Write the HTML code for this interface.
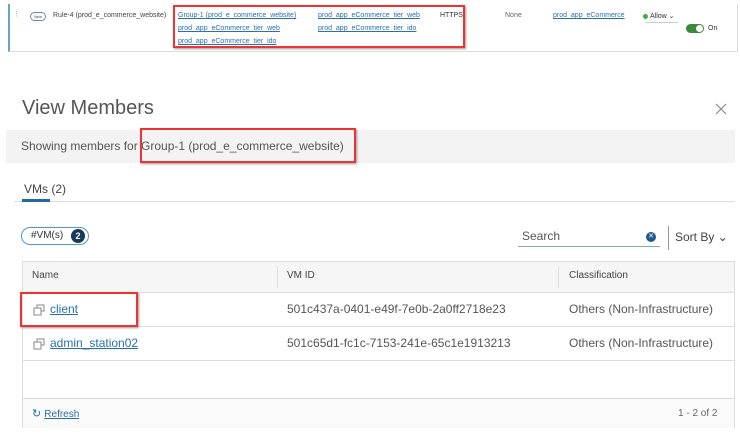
<!DOCTYPE html>
<html><head><style>
body{margin:0;width:740px;height:433px;background:#fff;font-family:"Liberation Sans",sans-serif;position:relative;overflow:hidden;color:#333}
.a{position:absolute;white-space:nowrap}
.l{color:#2a6fb0;text-decoration:underline}
.s{font-size:7px}
</style></head><body>
<div class="a" style="left:8px;top:4px;width:727px;height:47px;border-left:2px solid #6a9fd0;border-bottom:1px solid #ddd;border-right:1px solid #ddd"></div>
<div class="a s" style="left:13px;top:10px;color:#6a9fd0">⋮</div>
<div class="a" style="left:30px;top:12px;width:14px;height:7px;border:1px solid #6a8ab0;border-radius:5px;font-size:4px;text-align:center;line-height:7px;color:#446">New</div>
<div class="a s" style="left:53px;top:12px;color:#444">Rule-4 (prod_e_commerce_website)</div>
<div class="a" style="left:173px;top:5px;width:292px;height:43px;border:2px solid #e33;box-sizing:border-box;box-shadow:1px 1px 2px #999"></div>
<div class="a s l" style="left:178px;top:12px">Group-1 (prod_e_commerce_website)</div>
<div class="a s l" style="left:178px;top:25px">prod_app_eCommerce_tier_web</div>
<div class="a s l" style="left:178px;top:38px">prod_app_eCommerce_tier_ido</div>
<div class="a s l" style="left:318px;top:12px">prod_app_eCommerce_tier_web</div>
<div class="a s l" style="left:318px;top:25px">prod_app_eCommerce_tier_ido</div>
<div class="a s" style="left:440px;top:12px">HTTPS</div>
<div class="a s" style="left:505px;top:12px;color:#666">None</div>
<div class="a s l" style="left:553px;top:12px">prod_app_eCommerce</div>
<div class="a" style="left:643px;top:14px;width:5px;height:5px;border-radius:50%;background:#4a4"></div>
<div class="a s" style="left:650px;top:12px">Allow ⌄</div>
<div class="a" style="left:646px;top:22px;width:32px;border-top:1px solid #ccc"></div>
<div class="a" style="left:686px;top:24px;width:18px;height:9px;border-radius:5px;background:#3a8a3a"></div>
<div class="a" style="left:696px;top:25px;width:7px;height:7px;border-radius:50%;background:#fff"></div>
<div class="a s" style="left:708px;top:25px">On</div>
<div class="a" style="left:22px;top:97px;font-size:20px;color:#555">View Members</div>
<svg class="a" style="left:715px;top:103px" width="12" height="12"><path d="M1 1L11 11M11 1L1 11" stroke="#888" stroke-width="1.2"/></svg>
<div class="a" style="left:6px;top:130px;width:729px;height:33px;background:#f3f3f3"></div>
<div class="a" style="left:21px;top:139px;font-size:12px;color:#555">Showing members for Group-1 (prod_e_commerce_website)</div>
<div class="a" style="left:140px;top:128px;width:216px;height:35px;border:2px solid #e33;box-sizing:border-box;box-shadow:1px 1px 2px #999"></div>
<div class="a" style="left:24px;top:182px;font-size:12px;color:#444">VMs (2)</div>
<div class="a" style="left:14px;top:201px;width:721px;border-top:1px solid #ddd"></div>
<div class="a" style="left:22px;top:199px;width:28px;height:3px;background:#1f6a9e"></div>
<div class="a" style="left:21px;top:227px;width:68px;height:18px;border:1.5px solid #4a9ad0;border-radius:10px;box-sizing:border-box"></div>
<div class="a" style="left:31px;top:230px;font-size:10px">#VM(s)</div>
<div class="a" style="left:71px;top:229px;width:14px;height:14px;border-radius:50%;background:#173a5a;color:#fff;font-size:9px;text-align:center;line-height:14px;font-weight:bold">2</div>
<div class="a" style="left:522px;top:229px;font-size:12px;color:#555">Search</div>
<div class="a" style="left:518px;top:246px;width:142px;border-top:1px solid #8aa"></div>
<div class="a" style="left:646px;top:232px;width:10px;height:10px;border-radius:50%;background:#1f5a8a;color:#fff;font-size:7px;text-align:center;line-height:10px">✕</div>
<div class="a" style="left:668px;top:226px;height:24px;border-left:1px solid #999"></div>
<div class="a" style="left:675px;top:230px;font-size:12px;color:#444">Sort By ⌄</div>
<div class="a" style="left:22px;top:261px;width:713px;height:167px;border:1px solid #ddd;box-sizing:border-box"></div>
<div class="a" style="left:23px;top:262px;width:711px;height:30px;background:#f6f6f6;border-bottom:1px solid #ddd"></div>
<div class="a" style="left:277px;top:266px;height:22px;border-left:1px solid #ddd"></div>
<div class="a" style="left:558px;top:266px;height:22px;border-left:1px solid #ddd"></div>
<div class="a" style="left:32px;top:270px;font-size:10px;color:#444">Name</div>
<div class="a" style="left:287px;top:270px;font-size:10px;color:#444">VM ID</div>
<div class="a" style="left:569px;top:270px;font-size:10px;color:#444">Classification</div>
<div class="a" style="left:23px;top:326px;width:711px;border-top:1px solid #ddd"></div>
<div class="a" style="left:23px;top:360px;width:711px;border-top:1px solid #ddd"></div>
<div class="a" style="left:23px;top:398px;width:711px;height:29px;border-top:1px solid #ddd;background:#fafafa"></div>
<svg class="a" style="left:33px;top:304px" width="12" height="12"><rect x="4" y="1" width="7" height="6" fill="none" stroke="#888"/><rect x="1" y="4" width="7" height="7" fill="#fff" stroke="#888"/></svg>
<div class="a l" style="left:50px;top:302px;font-size:12px">client</div>
<div class="a" style="left:287px;top:302px;font-size:12px;color:#555">501c437a-0401-e49f-7e0b-2a0ff2718e23</div>
<div class="a" style="left:569px;top:302px;font-size:12px;color:#555">Others (Non-Infrastructure)</div>
<svg class="a" style="left:33px;top:338px" width="12" height="12"><rect x="4" y="1" width="7" height="6" fill="none" stroke="#888"/><rect x="1" y="4" width="7" height="7" fill="#fff" stroke="#888"/></svg>
<div class="a l" style="left:50px;top:336px;font-size:12px">admin_station02</div>
<div class="a" style="left:287px;top:336px;font-size:12px;color:#555">501c65d1-fc1c-7153-241e-65c1e1913213</div>
<div class="a" style="left:569px;top:336px;font-size:12px;color:#555">Others (Non-Infrastructure)</div>
<div class="a" style="left:20px;top:292px;width:118px;height:35px;border:2px solid #e33;box-sizing:border-box;box-shadow:1px 1px 2px #999"></div>
<div class="a" style="left:32px;top:407px;font-size:11px;color:#2a6fb0">↻ <span class="l" style="font-size:10px">Refresh</span></div>
<div class="a" style="left:678px;top:408px;font-size:10px;color:#666">1 - 2 of 2</div>
</body></html>
